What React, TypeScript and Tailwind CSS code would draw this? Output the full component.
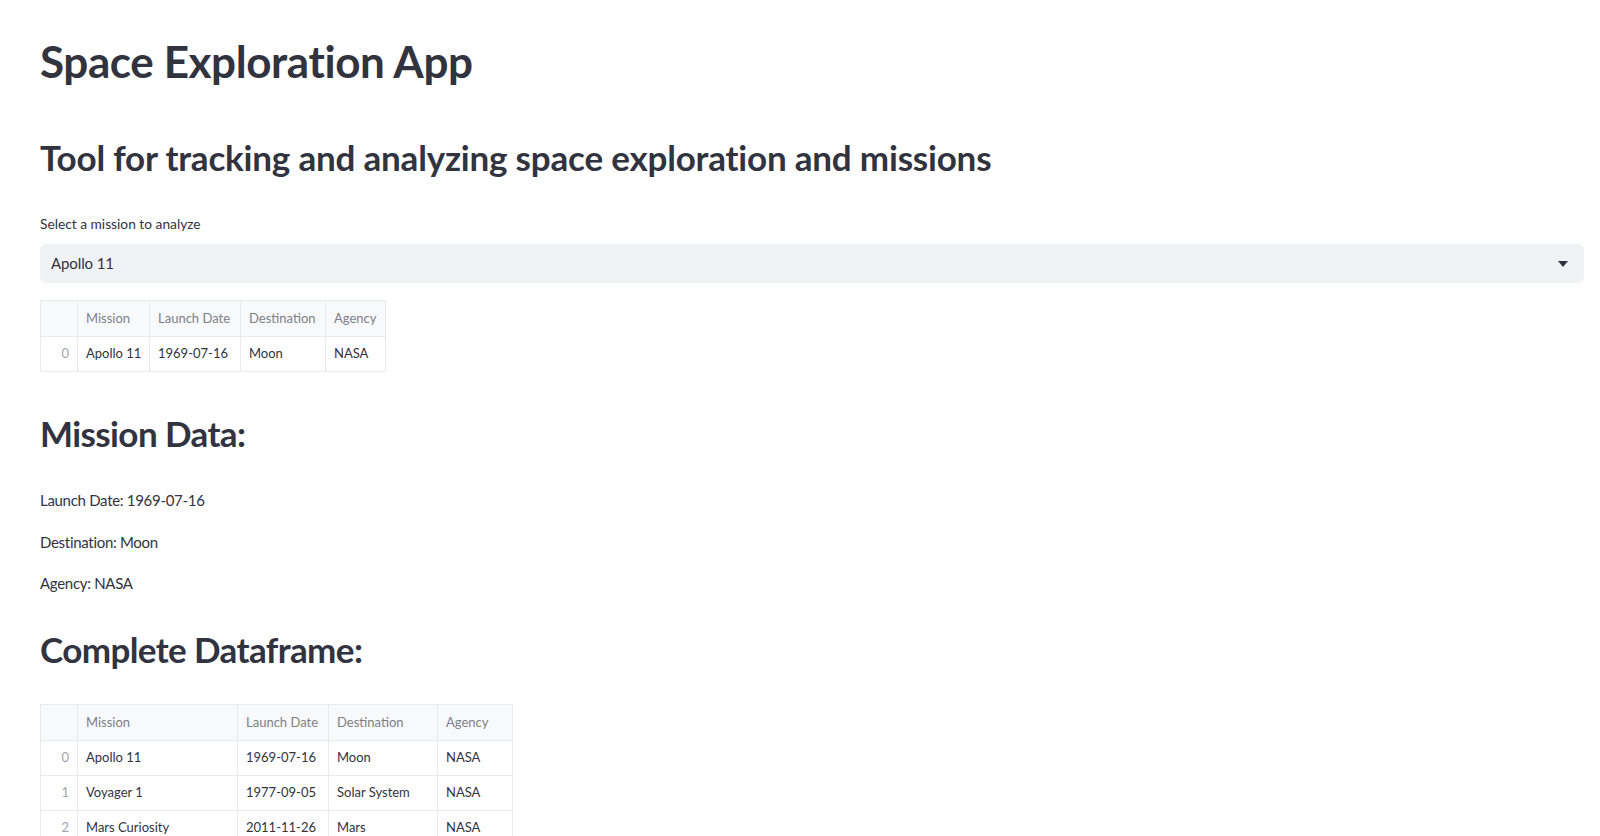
import React from "react";

const font = { fontFamily: "Lato, 'Noto Sans', sans-serif" };

type Row = { mission: string; date: string; destination: string; agency: string };

const missions: Row[] = [
  { mission: "Apollo 11", date: "1969-07-16", destination: "Moon", agency: "NASA" },
  { mission: "Voyager 1", date: "1977-09-05", destination: "Solar System", agency: "NASA" },
  { mission: "Mars Curiosity", date: "2011-11-26", destination: "Mars", agency: "NASA" },
  { mission: "Hubble Space Telescope", date: "1990-04-24", destination: "Low Earth Orbit", agency: "NASA" },
];

function DataFrame({ rows, cols }: { rows: Row[]; cols: string }) {
  const head =
    "h-[36px] flex items-center px-2 whitespace-nowrap bg-[#f8f9fb] text-[#7d7f88] border-r border-b border-[#e8eaee]";
  const cell =
    "h-[35px] flex items-center px-2 whitespace-nowrap text-[#31333f] border-r border-b border-[#e8eaee]";
  return (
    <div className={`grid w-fit border-t border-l border-[#e8eaee] text-[13px] ${cols}`}>
      <div className={head} />
      <div className={head}>Mission</div>
      <div className={head}>Launch Date</div>
      <div className={head}>Destination</div>
      <div className={head}>Agency</div>
      {rows.map((r, i) => (
        <React.Fragment key={i}>
          <div className={`${cell} justify-end text-[#a3a5ac]`}>{i}</div>
          <div className={cell}>{r.mission}</div>
          <div className={cell}>{r.date}</div>
          <div className={cell}>{r.destination}</div>
          <div className={cell}>{r.agency}</div>
        </React.Fragment>
      ))}
    </div>
  );
}

export default function App() {
  return (
    <div className="min-h-screen bg-white text-[#31333f] pl-[40px] pr-[16px]" style={font}>
      <h1 className="pt-[35px] text-[44px] leading-[52px] font-bold tracking-[-0.4px]">Space Exploration App</h1>
      <h2 className="mt-[49px] text-[35px] leading-[43px] font-bold tracking-[-0.2px]">
        Tool for tracking and analyzing space exploration and missions
      </h2>
      <label className="block mt-[36px] text-[13.75px] leading-[17px]">Select a mission to analyze</label>
      <div className="mt-[12px] h-[39px] rounded-md bg-[#f0f2f6] flex items-center justify-between pl-[11px] pr-[16px] text-[15px] tracking-[-0.1px]">
        <span>Apollo 11</span>
        <svg width="10" height="6" viewBox="0 0 10 6">
          <path d="M0 0 L10 0 L5 6 Z" fill="#31333f" />
        </svg>
      </div>
      <div className="mt-[17px]">
        <DataFrame rows={missions.slice(0, 1)} cols="grid-cols-[37px_72px_91px_85px_60px]" />
      </div>
      <h2 className="mt-[40px] text-[35px] leading-[43px] font-bold tracking-[-0.6px]">Mission Data:</h2>
      <p className="mt-[36px] text-[15px] leading-[19px] tracking-[-0.3px]">Launch Date: 1969-07-16</p>
      <p className="mt-[23px] text-[15px] leading-[19px] tracking-[-0.3px]">Destination: Moon</p>
      <p className="mt-[22px] text-[15px] leading-[19px] tracking-[-0.3px]">Agency: NASA</p>
      <h2 className="mt-[35px] text-[35px] leading-[43px] font-bold tracking-[-0.6px]">Complete Dataframe:</h2>
      <div className="mt-[33px] pb-[60px]">
        <DataFrame rows={missions} cols="grid-cols-[37px_160px_91px_109px_75px]" />
      </div>
    </div>
  );
}
